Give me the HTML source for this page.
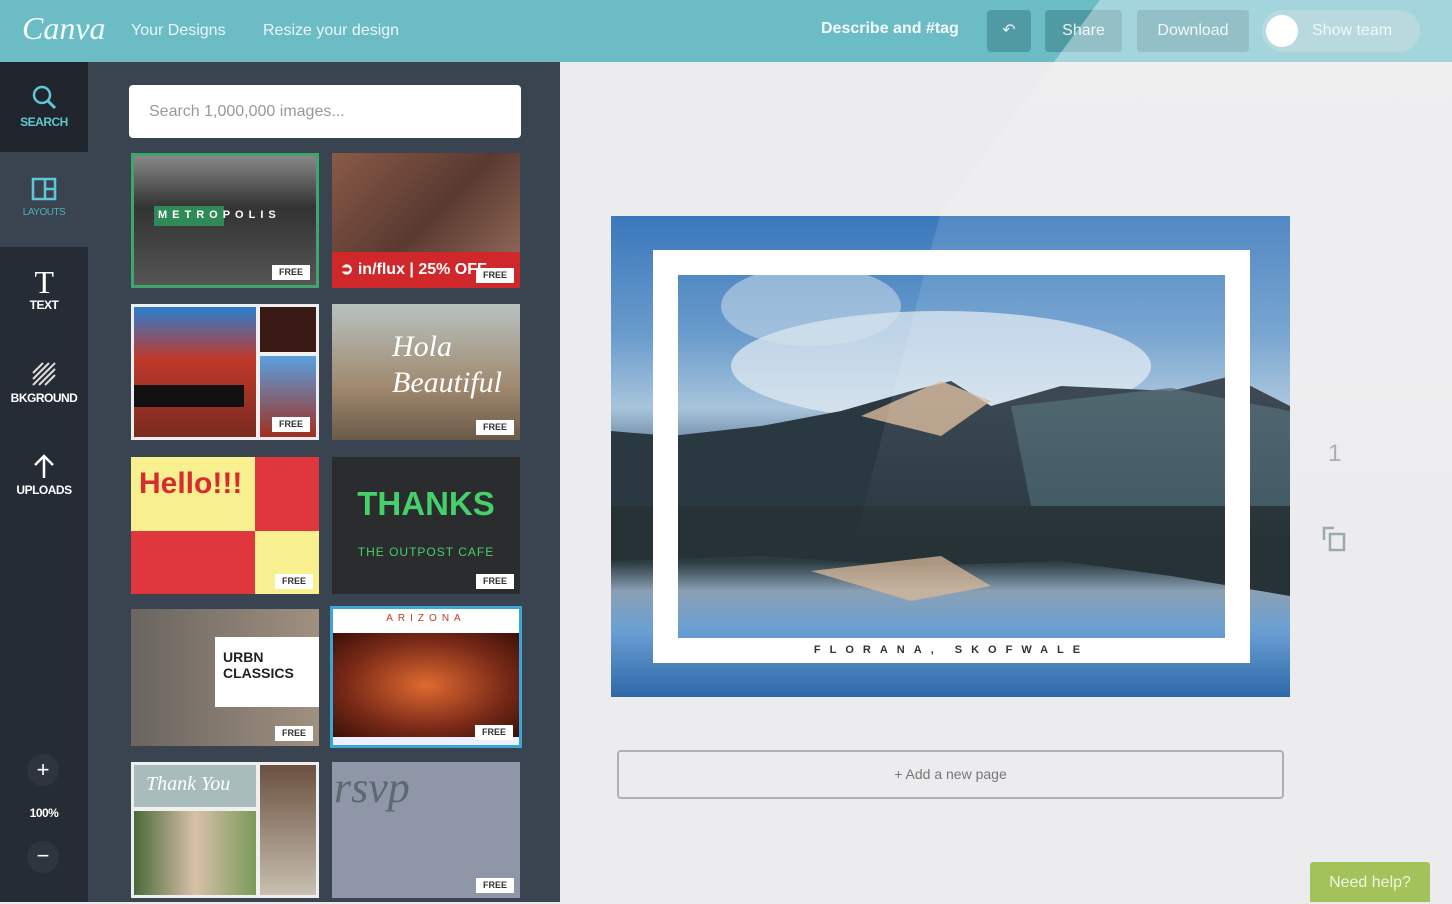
<!DOCTYPE html>
<html><head><meta charset="utf-8"><style>
*{margin:0;padding:0;box-sizing:border-box}
body{width:1452px;height:902px;overflow:hidden;position:relative;font-family:"Liberation Sans",sans-serif;background:#ececee}
.top{position:absolute;left:0;top:0;width:1452px;height:62px;background:#6cbcc6}
.btn{position:absolute;top:10px;height:42px;border-radius:4px;background:#4f9aa3;color:#e8f4f6;font-size:16px;text-align:center;line-height:42px}
.side{position:absolute;left:0;top:62px;width:88px;height:840px;background:#262c35}
.panel{position:absolute;left:88px;top:62px;width:472px;height:840px;background:#3a4350}
.tile{position:absolute;left:0;width:88px;text-align:center;color:#fff;font-size:12px;font-weight:bold;letter-spacing:-0.5px}
.th{position:absolute;width:188px;overflow:hidden}
.free{position:absolute;right:6px;bottom:5px;width:38px;height:15px;background:#fff;color:#333;font-size:9px;text-align:center;line-height:15px;font-weight:bold}
</style></head><body>
<div class="top"></div>
<div style="position:absolute;left:22px;top:10px;font-family:'Liberation Serif',serif;font-style:italic;font-size:32px;color:#f4fbfc">Canva</div>
<div style="position:absolute;left:131px;top:22px;color:#eaf6f8;font-size:16px">Your Designs</div>
<div style="position:absolute;left:263px;top:22px;color:#eaf6f8;font-size:16px">Resize your design</div>
<div style="position:absolute;left:821px;top:20px;color:#f4fbfc;font-size:16px;font-weight:bold">Describe and #tag</div>
<div class="btn" style="left:987px;width:44px">↶</div>
<div class="btn" style="left:1045px;width:77px">Share</div>
<div class="btn" style="left:1137px;width:112px;background:#4f9aa3">Download</div>
<div class="btn" style="left:1262px;width:158px;border-radius:21px;background:#8cc4ca;text-align:left;padding-left:50px">Show team</div>
<div style="position:absolute;left:1266px;top:15px;width:32px;height:32px;border-radius:50%;background:#fff"></div>

<div class="side"></div>
<div style="position:absolute;left:0;top:62px;width:88px;height:90px;background:#20252d"></div>
<div style="position:absolute;left:0;top:152px;width:88px;height:95px;background:#3a4350"></div>
<div class="tile" style="top:84px;color:#5fc7d3"><svg width="28" height="28" viewBox="0 0 28 28"><circle cx="12" cy="11" r="8" fill="none" stroke="#5fc7d3" stroke-width="2.5"/><path d="M18 17l7 7" stroke="#5fc7d3" stroke-width="3"/></svg><div>SEARCH</div></div>
<div class="tile" style="top:176px;color:#4fb0bc"><svg width="28" height="28" viewBox="0 0 28 28"><rect x="3" y="3" width="22" height="20" fill="none" stroke="#5fc7d3" stroke-width="2.5"/><path d="M15 3v20M15 13h10" stroke="#5fc7d3" stroke-width="2.5"/></svg><div style="font-weight:normal;font-size:10px">LAYOUTS</div></div>
<div class="tile" style="top:266px"><div style="font-family:'Liberation Serif',serif;font-size:32px;line-height:32px;font-weight:normal">T</div><div>TEXT</div></div>
<div class="tile" style="top:360px"><svg width="28" height="28" viewBox="0 0 28 28"><path d="M3 13L13 3M3 19L19 3M3 25L25 3M9 25L25 9M15 25L25 15" stroke="#ddd" stroke-width="2"/></svg><div>BKGROUND</div></div>
<div class="tile" style="top:452px"><svg width="28" height="28" viewBox="0 0 28 28"><path d="M14 26V4M5 13l9-9 9 9" stroke="#fff" stroke-width="2.5" fill="none"/></svg><div>UPLOADS</div></div>
<div style="position:absolute;left:27px;top:754px;width:32px;height:32px;border-radius:50%;background:#2e353f;color:#fff;text-align:center;line-height:32px;font-size:22px">+</div>
<div class="tile" style="top:806px">100%</div>
<div style="position:absolute;left:27px;top:841px;width:32px;height:32px;border-radius:50%;background:#2e353f;color:#fff;text-align:center;line-height:30px;font-size:22px">−</div>

<div class="panel"></div>
<div style="position:absolute;left:129px;top:85px;width:392px;height:53px;background:#fff;border-radius:4px;color:#999;font-size:16px;padding:18px 0 0 20px">Search 1,000,000 images...</div>

<div class="th" style="left:131px;top:153px;height:135px;background:linear-gradient(#888,#333 40%,#555);border:3px solid #3fa66b"><div style="position:absolute;left:20px;top:50px;width:70px;height:20px;background:#2e8b58"></div><div style="position:absolute;left:24px;top:53px;color:#fff;font-size:11px;letter-spacing:5px;font-weight:bold">METROPOLIS</div><div class="free">FREE</div></div>
<div class="th" style="left:332px;top:153px;height:135px;background:linear-gradient(135deg,#8a5a48,#5a3a30 50%,#9a7060)"><div style="position:absolute;left:0;bottom:0;width:188px;height:36px;background:#d0282a;color:#fff;font-weight:bold;font-size:16px;padding:7px 0 0 8px">➲ in/flux | 25% OFF</div><div class="free">FREE</div></div>
<div class="th" style="left:131px;top:304px;height:136px;background:#f0f0f0;border:3px solid #eee"><div style="position:absolute;left:0;top:0;width:122px;height:130px;background:linear-gradient(#2a7fd0,#c0392b 40%,#7a2a20)"></div><div style="position:absolute;left:126px;top:0;width:60px;height:45px;background:#3a1a15"></div><div style="position:absolute;left:126px;top:49px;width:60px;height:81px;background:linear-gradient(#5aa0e0,#a03020)"></div><div style="position:absolute;left:0;top:78px;width:110px;height:22px;background:#111"></div><div class="free">FREE</div></div>
<div class="th" style="left:332px;top:304px;height:136px;background:linear-gradient(#b8c2c0,#a08a70 60%,#6a5a48)"><div style="position:absolute;left:60px;top:25px;font-family:'Liberation Serif',serif;font-style:italic;color:#fff;font-size:30px;line-height:36px">Hola<br>Beautiful</div><div class="free">FREE</div></div>
<div class="th" style="left:131px;top:457px;height:137px;background:#f8f08e"><div style="position:absolute;left:124px;top:0;width:64px;height:74px;background:#e0363d"></div><div style="position:absolute;left:0;top:74px;width:124px;height:63px;background:#e0363d"></div><div style="position:absolute;left:8px;top:10px;color:#d82a30;font-weight:bold;font-size:30px">Hello!!!</div><div class="free">FREE</div></div>
<div class="th" style="left:332px;top:457px;height:137px;background:#2a2c2e"><div style="position:absolute;left:0;width:188px;top:28px;text-align:center;color:#45d06a;font-weight:bold;font-size:33px">THANKS</div><div style="position:absolute;left:0;width:188px;top:88px;text-align:center;color:#45d06a;font-size:12px;letter-spacing:1px">THE OUTPOST CAFE</div><div class="free">FREE</div></div>
<div class="th" style="left:131px;top:609px;height:137px;background:linear-gradient(90deg,#6a6560,#a09080)"><div style="position:absolute;left:84px;top:28px;width:104px;height:70px;background:#fff;color:#222;font-weight:bold;font-size:14px;padding:12px 0 0 8px">URBN CLASSICS</div><div class="free">FREE</div></div>
<div class="th" style="left:330px;top:606px;width:192px;height:142px;background:#eef;border:3px solid #3aa6d8"><div style="position:absolute;left:0;top:0;width:186px;height:24px;background:#fff;color:#c0392b;text-align:center;font-size:10px;letter-spacing:5px;padding-top:4px">ARIZONA</div><div style="position:absolute;left:0;top:24px;width:186px;height:104px;background:radial-gradient(ellipse at 50% 50%,#e06a30,#7a2a18 60%,#3a1008)"></div><div class="free">FREE</div></div>
<div class="th" style="left:131px;top:762px;height:136px;background:#f0f0f0;border:3px solid #eee"><div style="position:absolute;left:0;top:0;width:122px;height:42px;background:#a8bcbc;color:#fff;font-family:'Liberation Serif',serif;font-style:italic;font-size:20px;padding:8px 12px">Thank You</div><div style="position:absolute;left:0;top:46px;width:122px;height:84px;background:linear-gradient(90deg,#4a6a3a,#d8c0a8,#7a9a5a)"></div><div style="position:absolute;left:126px;top:0;width:60px;height:130px;background:linear-gradient(#6a5040,#c8c0b0)"></div></div>
<div class="th" style="left:332px;top:762px;height:136px;background:#8e96a8"><div style="position:absolute;left:2px;top:0;font-family:'Liberation Serif',serif;font-style:italic;color:#5a6a70;font-size:44px">rsvp</div><div class="free">FREE</div></div>

<div style="position:absolute;left:611px;top:216px;width:679px;height:481px;overflow:hidden">
<svg width="679" height="481" viewBox="0 0 679 481">
<defs><linearGradient id="sky" x1="0" y1="0" x2="0" y2="1"><stop offset="0" stop-color="#3a78bc"/><stop offset=".25" stop-color="#6a9ccc"/><stop offset=".4" stop-color="#a8c4dc"/><stop offset=".48" stop-color="#6a84a0"/><stop offset=".6" stop-color="#2a3a44"/><stop offset=".72" stop-color="#2c3c42"/><stop offset=".78" stop-color="#8aa0b4"/><stop offset=".86" stop-color="#6aa0d4"/><stop offset="1" stop-color="#2e68a8"/></linearGradient></defs>
<rect width="679" height="481" fill="url(#sky)"/>
<ellipse cx="330" cy="150" rx="210" ry="55" fill="#e4ecf2" opacity=".7"/>
<ellipse cx="200" cy="90" rx="90" ry="40" fill="#d8e4ee" opacity=".5"/>
<path d="M0 215L60 220 150 210 230 195 300 175 340 165 380 190 450 170 560 175 620 160 679 190V290H0Z" fill="#2a3842"/>
<path d="M400 190L560 172 679 195V290H420Z" fill="#46606a" opacity=".8"/>
<path d="M250 200L330 165 380 185 330 220Z" fill="#d8b898" opacity=".8"/>
<path d="M0 290H679V380L560 360 450 345 300 350 150 340 0 345Z" fill="#263236"/>
<path d="M200 355L330 340 380 370 300 385Z" fill="#d8b898" opacity=".75"/>
</svg>
<div style="position:absolute;left:42px;top:34px;width:597px;height:413px;border:25px solid #fff"></div>
<div style="position:absolute;left:42px;top:428px;width:597px;text-align:center;font-size:11px;letter-spacing:9px;color:#333;font-weight:bold">FLORANA, SKOFWALE</div>
</div>

<div style="position:absolute;left:1328px;top:440px;color:#aaa;font-size:24px">1</div>
<svg style="position:absolute;left:1322px;top:526px" width="26" height="26" viewBox="0 0 26 26"><path d="M2 14V2h10M8 8h14v16H8Z" fill="none" stroke="#9aa" stroke-width="2.5"/></svg>

<div style="position:absolute;left:617px;top:750px;width:667px;height:49px;border:2px solid #b0b0b0;border-radius:4px;text-align:center;line-height:45px;color:#777;font-size:14px">+ Add a new page</div>
<div style="position:absolute;left:1310px;top:862px;width:120px;height:40px;background:#a3c25a;border-radius:3px 3px 0 0;color:#eef6e0;font-size:16px;text-align:center;line-height:42px">Need help?</div>

<div style="position:absolute;left:0;top:0;width:1452px;height:902px;pointer-events:none;background:linear-gradient(rgba(255,255,255,.38),rgba(255,255,255,.38) 62px,rgba(255,255,255,.14) 63px,rgba(255,255,255,.1) 40%,rgba(255,255,255,0) 60%);clip-path:polygon(1100px 0,1452px 0,1452px 902px,760px 902px,940px 215px)"></div>
</body></html>
